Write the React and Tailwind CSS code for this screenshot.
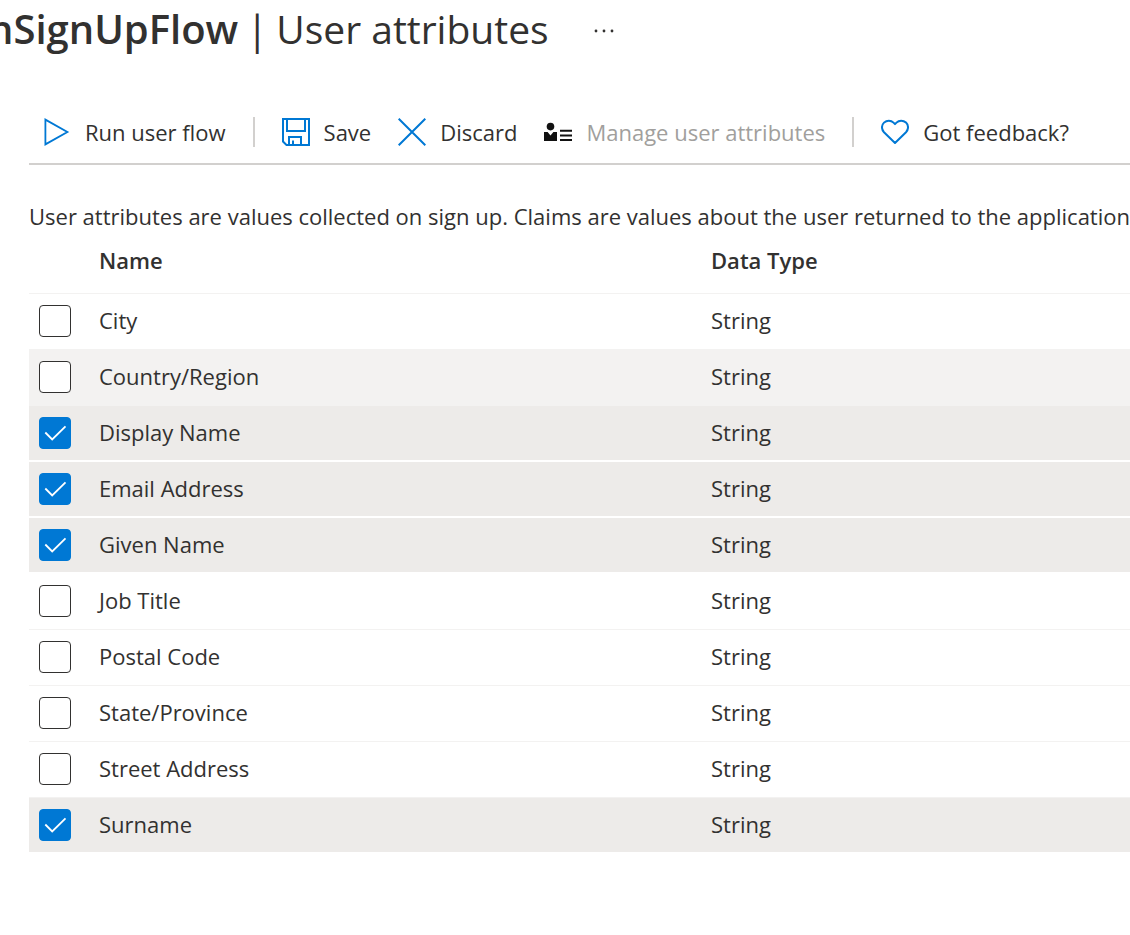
import { useState } from "react";

const INITIAL = [
  { name: "City" },
  { name: "Country/Region", hovered: true },
  { name: "Display Name", checked: true },
  { name: "Email Address", checked: true },
  { name: "Given Name", checked: true },
  { name: "Job Title" },
  { name: "Postal Code" },
  { name: "State/Province" },
  { name: "Street Address" },
  { name: "Surname", checked: true },
];

function RunIcon() {
  return (
    <svg width="28" height="28" viewBox="0 0 28 28" fill="none" stroke="#0078d4" strokeWidth="1.8" aria-hidden="true">
      <path d="M2.4 1.6V26.4L24.4 14Z" />
    </svg>
  );
}

function SaveIcon() {
  return (
    <svg width="28" height="28" viewBox="0 0 28 28" fill="none" stroke="#0078d4" strokeWidth="2" aria-hidden="true">
      <path d="M1 1H27V27H4.5L1 23.5Z" />
      <path d="M5 1V13H23V1" />
      <path d="M7 27V19H19V27" />
      <path d="M11 27V22.5" />
    </svg>
  );
}

function DiscardIcon() {
  return (
    <svg width="28" height="28" viewBox="0 0 28 28" fill="none" stroke="#0078d4" strokeWidth="2" aria-hidden="true">
      <path d="M0.7 0.7L27.3 27.3M27.3 0.7L0.7 27.3" />
    </svg>
  );
}

function ManageIcon() {
  return (
    <svg width="28" height="28" viewBox="0 0 28 28" fill="#111" aria-hidden="true">
      <circle cx="6.5" cy="8.6" r="3.8" />
      <path d="M0 14H3.6L6.5 17.6L9.4 14H13V23H0Z" />
      <path d="M16 11.8H28V13.8H16ZM16 16.4H28V18.4H16ZM16 21H28V23H16Z" />
    </svg>
  );
}

function HeartIcon() {
  return (
    <svg width="28" height="28" viewBox="0 0 28 28" fill="none" stroke="#0078d4" strokeWidth="2" strokeLinejoin="round" aria-hidden="true">
      <path d="M14 25L3 14.2C0.3 11.4 0.3 7.2 3 4.6C5.8 2 10 2 12.5 4.6L14 6.1L15.5 4.6C18 2 22.2 2 25 4.6C27.7 7.2 27.7 11.4 25 14.2Z" />
    </svg>
  );
}

function Command({ icon, children, disabled }) {
  return (
    <button
      type="button"
      disabled={disabled}
      className="flex shrink-0 items-center gap-3.5 whitespace-nowrap disabled:text-[#a19f9d]"
    >
      {icon}
      {children}
    </button>
  );
}

function Divider() {
  return <div className="h-[30px] w-0.5 shrink-0 bg-[#d2d0ce]" />;
}

function AttributeRow({ id, row, divided, onToggle }) {
  const top = divided ? "border-t-[#f3f2f1]" : "border-t-white";
  const fill = row.checked
    ? "bg-[#edebe9] border-b-white"
    : row.hovered
      ? "bg-[#f3f2f1] border-b-[#f3f2f1]"
      : "bg-white border-b-white";
  const cell = `h-14 border-y ${top} ${fill}`;
  return (
    <tr>
      <td className={`${cell} p-0`}>
        <span className="relative ml-2.5 flex size-8">
          <input
            id={id}
            type="checkbox"
            checked={!!row.checked}
            onChange={onToggle}
            className="size-8 appearance-none rounded-[4px] border border-[#323130] bg-white checked:border-[#0078d4] checked:bg-[#0078d4]"
          />
          {row.checked && (
            <svg className="pointer-events-none absolute inset-0" width="32" height="32" viewBox="0 0 32 32" fill="none" stroke="#fff" strokeWidth="1.8" aria-hidden="true">
              <path d="M6.3 15.5L13.2 22.5L26.5 9.3" />
            </svg>
          )}
        </span>
      </td>
      <td className={`${cell} pb-0.5`}>
        <label htmlFor={id}>{row.name}</label>
      </td>
      <td className={`${cell} pb-0.5`}>String</td>
    </tr>
  );
}

export default function App() {
  const [rows, setRows] = useState(INITIAL);
  const toggle = (index) =>
    setRows(rows.map((r, i) => (i === index ? { ...r, checked: !r.checked } : r)));

  return (
    <main className="min-h-screen overflow-hidden bg-white font-['Open_Sans','Noto_Sans',sans-serif] text-[22px] leading-[30px] text-[#323130]">
      <header className="flex h-[58px] items-center gap-11 whitespace-nowrap">
        <h1 className="-ml-3 flex items-baseline gap-2 text-[40px] leading-[58px]">
          <span className="font-semibold">nSignUpFlow</span>
          <span>|</span>
          <span className="text-[39px]">User attributes</span>
        </h1>
        <button type="button" aria-label="More options" className="mt-1 flex">
          <svg width="22" height="6" viewBox="0 0 22 6" fill="#323130" aria-hidden="true">
            <circle cx="3" cy="3" r="1.4" />
            <circle cx="11" cy="3" r="1.4" />
            <circle cx="19" cy="3" r="1.4" />
          </svg>
        </button>
      </header>

      <div className="ml-[29px]">
        <div role="toolbar" className="mt-[43px] flex h-16 items-center gap-[27px] border-b-2 border-[#d2d0ce] pl-3.5">
          <Command icon={<RunIcon />}>Run user flow</Command>
          <Divider />
          <Command icon={<SaveIcon />}>Save</Command>
          <Command icon={<DiscardIcon />}>Discard</Command>
          <Command icon={<ManageIcon />} disabled>Manage user attributes</Command>
          <Divider />
          <Command icon={<HeartIcon />}>Got feedback?</Command>
        </div>

        <p className="mt-9 whitespace-nowrap">
          User attributes are values collected on sign up. Claims are values about the user returned to the application
        </p>

        <table className="w-full table-fixed border-separate border-spacing-0 text-left">
          <thead>
            <tr className="align-top">
              <th className="h-[62px] w-[70px] p-0" aria-label="Selected" />
              <th className="w-[612px] p-0 pt-3.5 font-semibold">Name</th>
              <th className="p-0 pt-3.5 font-semibold">Data Type</th>
            </tr>
          </thead>
          <tbody>
            {rows.map((row, i) => (
              <AttributeRow
                key={row.name}
                id={`attribute-${i}`}
                row={row}
                divided={i === 0 || !rows[i - 1].checked}
                onToggle={() => toggle(i)}
              />
            ))}
          </tbody>
        </table>
      </div>
    </main>
  );
}
